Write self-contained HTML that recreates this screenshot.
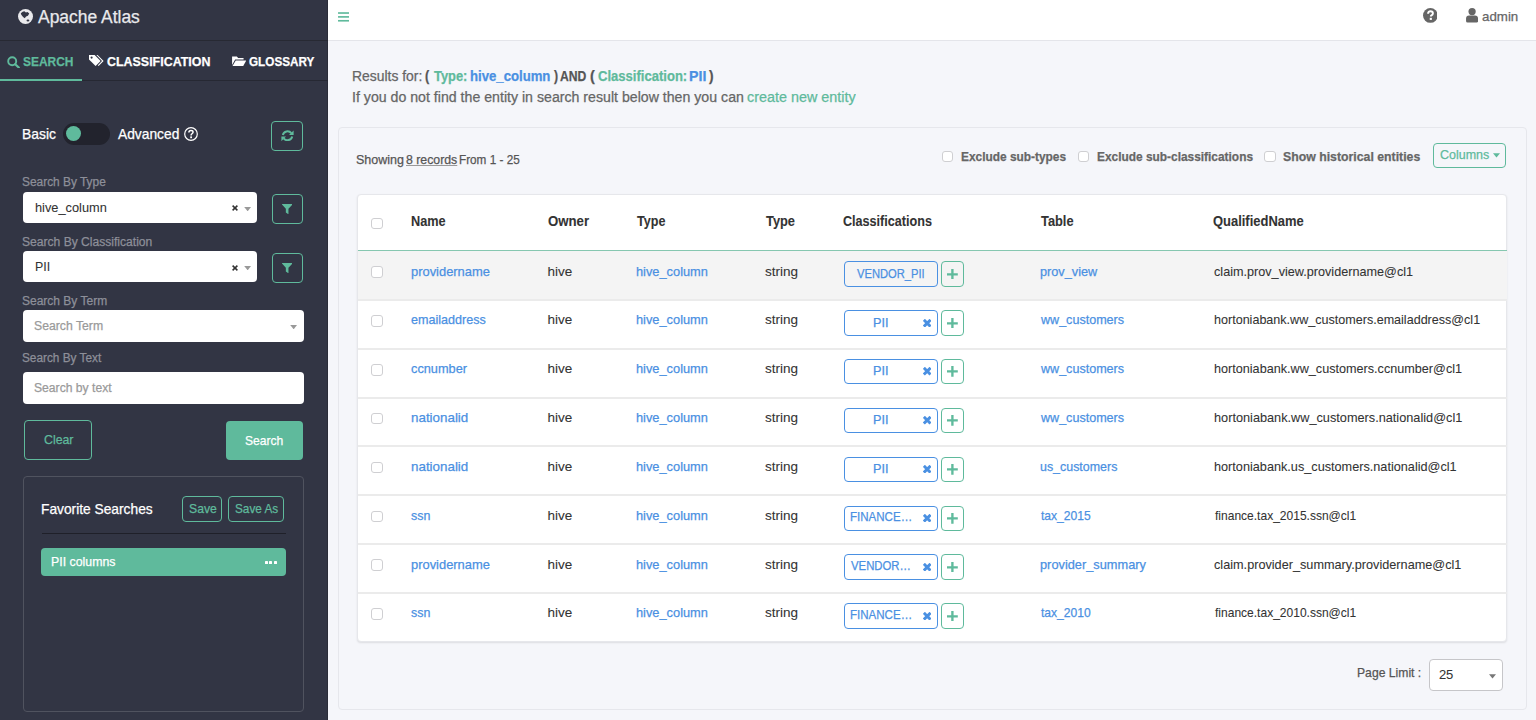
<!DOCTYPE html>
<html><head><meta charset="utf-8">
<style>
*{box-sizing:border-box;margin:0;padding:0}
html,body{width:1536px;height:720px;overflow:hidden;background:#f5f6fa;font-family:"Liberation Sans",sans-serif}
.a{position:absolute}
.t{position:absolute;white-space:nowrap;line-height:1;transform-origin:0 0;-webkit-text-stroke:0.25px currentColor}
</style></head><body>
<div class="a" style="left:0;top:0;width:328px;height:720px;background:#323544"></div>
<div class="a" style="left:327px;top:0;width:1px;height:720px;background:#2a2c38"></div>
<svg class="a" style="left:17.8px;top:8.9px" width="15" height="15" viewBox="0 0 16 16"><circle cx="8" cy="8" r="8" fill="#e9e9ec"/><path d="M3 4.4 L5 3 L6.8 2.4 L8.4 3.7 L10.1 3.2 L12 4.7 L10.6 7.2 L8.6 7.9 L7.2 9.9 L5.4 8.4 L3.5 6.2 Z" fill="#323544"/><ellipse cx="10.6" cy="12.3" rx="1.5" ry="1.1" fill="#323544"/></svg>
<div class="a" style="left:0;top:40.2px;width:328px;height:1.3px;background:#272933"></div>
<svg class="a" style="left:7px;top:55.5px" width="13" height="12" viewBox="0 0 13 12"><circle cx="5.2" cy="5.2" r="4" fill="none" stroke="#5fba9c" stroke-width="1.9"/><path d="M8.2 8.2 L11.8 11.6" stroke="#5fba9c" stroke-width="2.2" stroke-linecap="round"/></svg>
<svg class="a" style="left:89px;top:55px" width="15" height="12" viewBox="0 0 15 12"><path d="M0 0 H5.6 L11.6 6 L6.6 11 L0 4.6 Z" fill="#fff"/><circle cx="2.6" cy="2.6" r="1.1" fill="#323544"/><path d="M7.4 0 H8.6 L14.6 6 L9.6 11 L8.8 10.2 L13 6 Z" fill="#fff"/></svg>
<svg class="a" style="left:231.5px;top:55.5px" width="14.5" height="10.5" viewBox="0 0 15 11"><path d="M0 0.5 H5 L6.3 2 H12 V3.6 H3.2 L0 9.5 Z" fill="#fff"/><path d="M3.8 4.6 H15 L11.6 10.6 H0.4 Z" fill="#fff"/></svg>
<div class="a" style="left:0;top:80px;width:328px;height:1px;background:#262833"></div>
<div class="a" style="left:0;top:79px;width:82px;height:2px;background:#5fba9c"></div>
<div class="a" style="left:63px;top:123px;width:47px;height:21.5px;border-radius:11px;background:#22232d"></div>
<div class="a" style="left:66px;top:125.8px;width:15.2px;height:15.2px;border-radius:50%;background:#5fba9c"></div>
<svg class="a" style="left:183.5px;top:127px" width="14" height="14" viewBox="0 0 14 14"><circle cx="7" cy="7" r="6.3" fill="none" stroke="#fff" stroke-width="1.2"/><path d="M4.9 5.4 Q4.9 3.4 7 3.4 Q9.1 3.4 9.1 5.1 Q9.1 6.2 7.9 6.8 Q7.1 7.2 7.1 8.4" fill="none" stroke="#fff" stroke-width="1.5"/><rect x="6.2" y="9.4" width="1.8" height="1.8" fill="#fff"/></svg>
<div class="a" style="left:271px;top:120.5px;width:32px;height:30px;border:1px solid #5fba9c;border-radius:4px"></div>
<svg class="a" style="left:280.5px;top:129.5px" width="13" height="11.5" viewBox="0 0 13 11.5"><path d="M1.8 5 A4.8 4.8 0 0 1 10.3 3.2" fill="none" stroke="#5fba9c" stroke-width="2"/><path d="M12.6 0.4 V5 H8 Z" fill="#5fba9c"/><path d="M11.2 6.5 A4.8 4.8 0 0 1 2.7 8.3" fill="none" stroke="#5fba9c" stroke-width="2"/><path d="M0.4 11.1 V6.5 H5 Z" fill="#5fba9c"/></svg>
<div class="a" style="left:22.8px;top:192.3px;width:234.4px;height:30.9px;background:#fff;border-radius:4px"></div>
<svg class="a" style="left:231.8px;top:205.4px" width="6" height="6" viewBox="0 0 6 6"><path d="M0.6 0.6 L5.4 5.4 M5.4 0.6 L0.6 5.4" stroke="#333" stroke-width="1.5"/></svg>
<svg class="a" style="left:243.7px;top:206.9px" width="7.3" height="4.3" viewBox="0 0 8 5"><path d="M0 0 H8 L4 5 Z" fill="#999"/></svg>
<div class="a" style="left:271.7px;top:193.5px;width:31.4px;height:30.1px;border:1px solid #5fba9c;border-radius:4px"></div>
<svg class="a" style="left:281.9px;top:203.8px" width="10.3" height="10.3" viewBox="0 0 11 11"><path d="M0 0 H11 V0.6 L6.9 5 V11 L4.1 9.2 V5 L0 0.6 Z" fill="#5fba9c"/></svg>
<div class="a" style="left:22.8px;top:251.4px;width:234.4px;height:30.9px;background:#fff;border-radius:4px"></div>
<svg class="a" style="left:231.8px;top:264.5px" width="6" height="6" viewBox="0 0 6 6"><path d="M0.6 0.6 L5.4 5.4 M5.4 0.6 L0.6 5.4" stroke="#333" stroke-width="1.5"/></svg>
<svg class="a" style="left:243.7px;top:265.9px" width="7.3" height="4.3" viewBox="0 0 8 5"><path d="M0 0 H8 L4 5 Z" fill="#999"/></svg>
<div class="a" style="left:271.7px;top:252.8px;width:31.4px;height:29.9px;border:1px solid #5fba9c;border-radius:4px"></div>
<svg class="a" style="left:281.9px;top:263.1px" width="10.3" height="10.3" viewBox="0 0 11 11"><path d="M0 0 H11 V0.6 L6.9 5 V11 L4.1 9.2 V5 L0 0.6 Z" fill="#5fba9c"/></svg>
<div class="a" style="left:22.8px;top:310.3px;width:281.5px;height:31.4px;background:#fff;border-radius:4px"></div>
<svg class="a" style="left:289.5px;top:324.5px" width="7.3" height="4.3" viewBox="0 0 8 5"><path d="M0 0 H8 L4 5 Z" fill="#999"/></svg>
<div class="a" style="left:22.8px;top:372px;width:281.5px;height:32.2px;background:#fff;border-radius:4px"></div>
<div class="a" style="left:24.2px;top:420px;width:67.9px;height:40px;border:1px solid #5fba9c;border-radius:4px"></div>
<div class="a" style="left:226px;top:420.5px;width:77px;height:39.5px;background:#5fba9c;border-radius:4px"></div>
<div class="a" style="left:22.7px;top:475.5px;width:281.7px;height:236px;border:1px solid #50535f;border-radius:4px"></div>
<div class="a" style="left:182.2px;top:496.1px;width:39.9px;height:25.7px;border:1px solid #5fba9c;border-radius:4px"></div>
<div class="a" style="left:228.3px;top:496.1px;width:55.9px;height:25.7px;border:1px solid #5fba9c;border-radius:4px"></div>
<div class="a" style="left:41.5px;top:533px;width:244.5px;height:1px;background:#1f2029"></div>
<div class="a" style="left:41.2px;top:547.9px;width:244.8px;height:27.9px;background:#5fba9c;border-radius:4px"></div>
<div class="a" style="left:264.5px;top:560.8px;width:3.2px;height:3.6px;background:#fff;border-radius:0.6px"></div><div class="a" style="left:269.2px;top:560.8px;width:3.2px;height:3.6px;background:#fff;border-radius:0.6px"></div><div class="a" style="left:273.9px;top:560.8px;width:3.2px;height:3.6px;background:#fff;border-radius:0.6px"></div>
<div class="a" style="left:328px;top:0;width:1208px;height:40px;background:#fff"></div>
<div class="a" style="left:328px;top:40px;width:1208px;height:1px;background:#e4e5ea"></div>
<svg class="a" style="left:337.5px;top:12px" width="11.7" height="9.7" viewBox="0 0 12 10"><rect x="0" y="0.2" width="12" height="1.7" fill="#5fba9c"/><rect x="0" y="4.2" width="12" height="1.7" fill="#5fba9c"/><rect x="0" y="8.2" width="12" height="1.7" fill="#5fba9c"/></svg>
<svg class="a" style="left:1422.6px;top:8.1px" width="14.8" height="14.8" viewBox="0 0 16 16"><circle cx="8" cy="8" r="8" fill="#666"/><path d="M5.5 6.1 Q5.5 3.5 8.1 3.5 Q10.7 3.5 10.7 5.7 Q10.7 7.1 9.2 7.9 Q8.5 8.3 8.5 9.3" fill="none" stroke="#fff" stroke-width="2.1"/><rect x="7.3" y="10.6" width="2.3" height="2.3" fill="#fff"/></svg>
<svg class="a" style="left:1466px;top:8.4px" width="12.2" height="14.6" viewBox="0 0 12 14.5"><circle cx="6" cy="3.6" r="3.6" fill="#666"/><path d="M0 13 V10.6 Q0 7.4 3 7.4 H9 Q12 7.4 12 10.6 V13 Q12 14.5 10.5 14.5 H1.5 Q0 14.5 0 13 Z" fill="#666"/></svg>
<div class="a" style="left:338.3px;top:127px;width:1188.3px;height:583.2px;border:1px solid #e6e7ec;border-radius:4px;background:#f5f6fa"></div>
<div class="a" style="left:942.1px;top:151.3px;width:11.4px;height:11.2px;border:1px solid #cfcfd2;border-radius:3px;background:#fff"></div>
<div class="a" style="left:1077.9px;top:151.3px;width:11.4px;height:11.2px;border:1px solid #cfcfd2;border-radius:3px;background:#fff"></div>
<div class="a" style="left:1264.3px;top:151.3px;width:11.4px;height:11.2px;border:1px solid #cfcfd2;border-radius:3px;background:#fff"></div>
<div class="a" style="left:1433.2px;top:143.3px;width:72.7px;height:24.5px;border:1px solid #5fba9c;border-radius:4px"></div>
<svg class="a" style="left:1492.5px;top:153px" width="7" height="4.8" viewBox="0 0 8 5"><path d="M0 0 H8 L4 5 Z" fill="#5fba9c"/></svg>
<div class="a" style="left:357px;top:193.5px;width:1150.3px;height:448.8px;background:#fff;border:1px solid #e6e7eb;border-radius:4px;box-shadow:0 1px 2px rgba(0,0,0,0.10)"></div>
<div class="a" style="left:357.5px;top:249.5px;width:1149.5px;height:1.6px;background:#86c7b0"></div>
<div class="a" style="left:357.5px;top:250.9px;width:1149.3px;height:49.1px;background:#f4f4f4"></div>
<div class="a" style="left:357.5px;top:299.00px;width:1149.3px;height:2px;background:#ebebeb"></div>
<div class="a" style="left:357.5px;top:347.83px;width:1149.3px;height:2px;background:#ebebeb"></div>
<div class="a" style="left:357.5px;top:396.66px;width:1149.3px;height:2px;background:#ebebeb"></div>
<div class="a" style="left:357.5px;top:445.49px;width:1149.3px;height:2px;background:#ebebeb"></div>
<div class="a" style="left:357.5px;top:494.32px;width:1149.3px;height:2px;background:#ebebeb"></div>
<div class="a" style="left:357.5px;top:543.15px;width:1149.3px;height:2px;background:#ebebeb"></div>
<div class="a" style="left:357.5px;top:591.98px;width:1149.3px;height:2px;background:#ebebeb"></div>
<div class="a" style="left:371.3px;top:217.50px;width:11.8px;height:11.5px;border:1px solid #cfcfd2;border-radius:3px;background:#fff"></div>
<div class="a" style="left:371.3px;top:266.40px;width:11.8px;height:11.5px;border:1px solid #cfcfd2;border-radius:3px;background:#fff"></div>
<div class="a" style="left:371.3px;top:315.23px;width:11.8px;height:11.5px;border:1px solid #cfcfd2;border-radius:3px;background:#fff"></div>
<div class="a" style="left:371.3px;top:364.06px;width:11.8px;height:11.5px;border:1px solid #cfcfd2;border-radius:3px;background:#fff"></div>
<div class="a" style="left:371.3px;top:412.89px;width:11.8px;height:11.5px;border:1px solid #cfcfd2;border-radius:3px;background:#fff"></div>
<div class="a" style="left:371.3px;top:461.72px;width:11.8px;height:11.5px;border:1px solid #cfcfd2;border-radius:3px;background:#fff"></div>
<div class="a" style="left:371.3px;top:510.55px;width:11.8px;height:11.5px;border:1px solid #cfcfd2;border-radius:3px;background:#fff"></div>
<div class="a" style="left:371.3px;top:559.38px;width:11.8px;height:11.5px;border:1px solid #cfcfd2;border-radius:3px;background:#fff"></div>
<div class="a" style="left:371.3px;top:608.21px;width:11.8px;height:11.5px;border:1px solid #cfcfd2;border-radius:3px;background:#fff"></div>
<div class="a" style="left:844px;top:261.40px;width:93.6px;height:25.4px;border:1.2px solid #4a90e2;border-radius:4px"></div>
<div class="a" style="left:940.7px;top:261.40px;width:23.1px;height:25.4px;border:1.2px solid #5fba9c;border-radius:4px"></div>
<svg class="a" style="left:947px;top:268.70px" width="10.8" height="10.8" viewBox="0 0 11 11"><path d="M5.5 0 V11 M0 5.5 H11" stroke="#5fba9c" stroke-width="2.4"/></svg>
<div class="a" style="left:844px;top:310.23px;width:93.6px;height:25.4px;border:1.2px solid #4a90e2;border-radius:4px"></div>
<svg class="a" style="left:923px;top:318.53px" width="8.4" height="8.4" viewBox="0 0 6 6"><path d="M0.6 0.6 L5.4 5.4 M5.4 0.6 L0.6 5.4" stroke="#4a90e2" stroke-width="2.1"/></svg>
<div class="a" style="left:940.7px;top:310.23px;width:23.1px;height:25.4px;border:1.2px solid #5fba9c;border-radius:4px"></div>
<svg class="a" style="left:947px;top:317.53px" width="10.8" height="10.8" viewBox="0 0 11 11"><path d="M5.5 0 V11 M0 5.5 H11" stroke="#5fba9c" stroke-width="2.4"/></svg>
<div class="a" style="left:844px;top:359.06px;width:93.6px;height:25.4px;border:1.2px solid #4a90e2;border-radius:4px"></div>
<svg class="a" style="left:923px;top:367.35999999999996px" width="8.4" height="8.4" viewBox="0 0 6 6"><path d="M0.6 0.6 L5.4 5.4 M5.4 0.6 L0.6 5.4" stroke="#4a90e2" stroke-width="2.1"/></svg>
<div class="a" style="left:940.7px;top:359.06px;width:23.1px;height:25.4px;border:1.2px solid #5fba9c;border-radius:4px"></div>
<svg class="a" style="left:947px;top:366.36px" width="10.8" height="10.8" viewBox="0 0 11 11"><path d="M5.5 0 V11 M0 5.5 H11" stroke="#5fba9c" stroke-width="2.4"/></svg>
<div class="a" style="left:844px;top:407.89px;width:93.6px;height:25.4px;border:1.2px solid #4a90e2;border-radius:4px"></div>
<svg class="a" style="left:923px;top:416.19px" width="8.4" height="8.4" viewBox="0 0 6 6"><path d="M0.6 0.6 L5.4 5.4 M5.4 0.6 L0.6 5.4" stroke="#4a90e2" stroke-width="2.1"/></svg>
<div class="a" style="left:940.7px;top:407.89px;width:23.1px;height:25.4px;border:1.2px solid #5fba9c;border-radius:4px"></div>
<svg class="a" style="left:947px;top:415.19px" width="10.8" height="10.8" viewBox="0 0 11 11"><path d="M5.5 0 V11 M0 5.5 H11" stroke="#5fba9c" stroke-width="2.4"/></svg>
<div class="a" style="left:844px;top:456.72px;width:93.6px;height:25.4px;border:1.2px solid #4a90e2;border-radius:4px"></div>
<svg class="a" style="left:923px;top:465.02px" width="8.4" height="8.4" viewBox="0 0 6 6"><path d="M0.6 0.6 L5.4 5.4 M5.4 0.6 L0.6 5.4" stroke="#4a90e2" stroke-width="2.1"/></svg>
<div class="a" style="left:940.7px;top:456.72px;width:23.1px;height:25.4px;border:1.2px solid #5fba9c;border-radius:4px"></div>
<svg class="a" style="left:947px;top:464.02px" width="10.8" height="10.8" viewBox="0 0 11 11"><path d="M5.5 0 V11 M0 5.5 H11" stroke="#5fba9c" stroke-width="2.4"/></svg>
<div class="a" style="left:844px;top:505.55px;width:93.6px;height:25.4px;border:1.2px solid #4a90e2;border-radius:4px"></div>
<svg class="a" style="left:923px;top:513.8499999999999px" width="8.4" height="8.4" viewBox="0 0 6 6"><path d="M0.6 0.6 L5.4 5.4 M5.4 0.6 L0.6 5.4" stroke="#4a90e2" stroke-width="2.1"/></svg>
<div class="a" style="left:940.7px;top:505.55px;width:23.1px;height:25.4px;border:1.2px solid #5fba9c;border-radius:4px"></div>
<svg class="a" style="left:947px;top:512.85px" width="10.8" height="10.8" viewBox="0 0 11 11"><path d="M5.5 0 V11 M0 5.5 H11" stroke="#5fba9c" stroke-width="2.4"/></svg>
<div class="a" style="left:844px;top:554.38px;width:93.6px;height:25.4px;border:1.2px solid #4a90e2;border-radius:4px"></div>
<svg class="a" style="left:923px;top:562.68px" width="8.4" height="8.4" viewBox="0 0 6 6"><path d="M0.6 0.6 L5.4 5.4 M5.4 0.6 L0.6 5.4" stroke="#4a90e2" stroke-width="2.1"/></svg>
<div class="a" style="left:940.7px;top:554.38px;width:23.1px;height:25.4px;border:1.2px solid #5fba9c;border-radius:4px"></div>
<svg class="a" style="left:947px;top:561.68px" width="10.8" height="10.8" viewBox="0 0 11 11"><path d="M5.5 0 V11 M0 5.5 H11" stroke="#5fba9c" stroke-width="2.4"/></svg>
<div class="a" style="left:844px;top:603.21px;width:93.6px;height:25.4px;border:1.2px solid #4a90e2;border-radius:4px"></div>
<svg class="a" style="left:923px;top:611.51px" width="8.4" height="8.4" viewBox="0 0 6 6"><path d="M0.6 0.6 L5.4 5.4 M5.4 0.6 L0.6 5.4" stroke="#4a90e2" stroke-width="2.1"/></svg>
<div class="a" style="left:940.7px;top:603.21px;width:23.1px;height:25.4px;border:1.2px solid #5fba9c;border-radius:4px"></div>
<svg class="a" style="left:947px;top:610.51px" width="10.8" height="10.8" viewBox="0 0 11 11"><path d="M5.5 0 V11 M0 5.5 H11" stroke="#5fba9c" stroke-width="2.4"/></svg>
<div class="a" style="left:1428.5px;top:659.1px;width:74.1px;height:31.5px;border:1px solid #c6c6c9;border-radius:4px;background:#fff"></div>
<svg class="a" style="left:1489.3px;top:673.9px" width="7" height="4.8" viewBox="0 0 8 5"><path d="M0 0 H8 L4 5 Z" fill="#777"/></svg>
<div class="t" style="left:37.50px;top:7.60px;font-size:18px;font-weight:400;color:#e9e9ec;transform:scaleX(0.9692);">Apache Atlas</div>
<div class="t" style="left:22.58px;top:54.50px;font-size:13px;font-weight:700;color:#5fba9c;transform:scaleX(0.9189);">SEARCH</div>
<div class="t" style="left:106.84px;top:54.50px;font-size:13px;font-weight:700;color:#fff;transform:scaleX(0.9566);">CLASSIFICATION</div>
<div class="t" style="left:249.40px;top:54.50px;font-size:13px;font-weight:700;color:#fff;transform:scaleX(0.9014);">GLOSSARY</div>
<div class="t" style="left:22.37px;top:125.60px;font-size:15px;font-weight:400;color:#fff;transform:scaleX(0.9257);">Basic</div>
<div class="t" style="left:118.10px;top:125.60px;font-size:15px;font-weight:400;color:#fff;transform:scaleX(0.9197);">Advanced</div>
<div class="t" style="left:22.31px;top:176.30px;font-size:12px;font-weight:400;color:#8d8f99;transform:scaleX(0.9916);">Search By Type</div>
<div class="t" style="left:34.52px;top:200.70px;font-size:13px;font-weight:400;color:#333;transform:scaleX(0.9831);-webkit-text-stroke:0.08px currentColor;">hive_column</div>
<div class="t" style="left:22.29px;top:235.60px;font-size:12px;font-weight:400;color:#8d8f99;transform:scaleX(1.0070);">Search By Classification</div>
<div class="t" style="left:34.51px;top:261.00px;font-size:12.5px;font-weight:400;color:#333;transform:scaleX(0.9923);-webkit-text-stroke:0.08px currentColor;">PII</div>
<div class="t" style="left:22.00px;top:295.00px;font-size:12px;font-weight:400;color:#8d8f99;transform:scaleX(1.0000);">Search By Term</div>
<div class="t" style="left:34.02px;top:320.00px;font-size:12.5px;font-weight:400;color:#9a9a9a;transform:scaleX(0.9783);">Search Term</div>
<div class="t" style="left:22.02px;top:352.30px;font-size:12px;font-weight:400;color:#8d8f99;transform:scaleX(0.9838);">Search By Text</div>
<div class="t" style="left:34.03px;top:382.00px;font-size:12.5px;font-weight:400;color:#9a9a9a;transform:scaleX(0.9709);">Search by text</div>
<div class="t" style="left:43.69px;top:433.30px;font-size:13.5px;font-weight:400;color:#5fba9c;transform:scaleX(0.9129);">Clear</div>
<div class="t" style="left:245.10px;top:433.50px;font-size:13.5px;font-weight:400;color:#fff;transform:scaleX(0.8951);">Search</div>
<div class="t" style="left:40.95px;top:501.70px;font-size:14.5px;font-weight:400;color:#fff;transform:scaleX(0.9491);">Favorite Searches</div>
<div class="t" style="left:188.50px;top:502.00px;font-size:13.5px;font-weight:400;color:#5fba9c;transform:scaleX(0.9034);">Save</div>
<div class="t" style="left:234.73px;top:502.00px;font-size:13.5px;font-weight:400;color:#5fba9c;transform:scaleX(0.8708);">Save As</div>
<div class="t" style="left:50.61px;top:556.20px;font-size:12.5px;font-weight:400;color:#fff;transform:scaleX(0.9875);">PII columns</div>
<div class="t" style="left:1482.11px;top:10.20px;font-size:13.5px;font-weight:400;color:#666;transform:scaleX(0.9857);">admin</div>
<div class="t" style="left:351.71px;top:69.40px;font-size:14px;font-weight:400;color:#666;transform:scaleX(0.9928);">Results for:</div>
<div class="t" style="left:425.10px;top:69.40px;font-size:14px;font-weight:700;color:#555;transform:scaleX(0.9000);">(</div>
<div class="t" style="left:434.30px;top:69.40px;font-size:14px;font-weight:700;color:#5fba9c;transform:scaleX(0.9200);">Type:</div>
<div class="t" style="left:469.76px;top:69.40px;font-size:14px;font-weight:700;color:#4a90e2;transform:scaleX(0.9393);">hive_column</div>
<div class="t" style="left:553.50px;top:69.40px;font-size:14px;font-weight:700;color:#555;transform:scaleX(0.8750);">)</div>
<div class="t" style="left:560.23px;top:69.40px;font-size:14px;font-weight:700;color:#555;transform:scaleX(0.8690);">AND</div>
<div class="t" style="left:589.68px;top:69.40px;font-size:14px;font-weight:700;color:#555;transform:scaleX(1.0250);">(</div>
<div class="t" style="left:598.27px;top:69.40px;font-size:14px;font-weight:700;color:#5fba9c;transform:scaleX(0.9323);">Classification:</div>
<div class="t" style="left:688.99px;top:69.40px;font-size:14px;font-weight:700;color:#4a90e2;transform:scaleX(1.0133);">PII</div>
<div class="t" style="left:709.30px;top:69.40px;font-size:14px;font-weight:700;color:#555;transform:scaleX(0.9750);">)</div>
<div class="t" style="left:351.69px;top:90.00px;font-size:14px;font-weight:400;color:#666;transform:scaleX(1.0111);">If you do not find the entity in search result below then you can</div>
<div class="t" style="left:746.97px;top:90.00px;font-size:14px;font-weight:400;color:#5fba9c;transform:scaleX(1.0267);">create new entity</div>
<div class="t" style="left:355.81px;top:153.50px;font-size:12.6px;font-weight:400;color:#555;transform:scaleX(0.9936);">Showing</div>
<div class="t" style="left:406.12px;top:153.50px;font-size:12.6px;font-weight:400;color:#555;transform:scaleX(0.9765);text-decoration:underline;text-decoration-color:#999">8 records</div>
<div class="t" style="left:459.27px;top:153.50px;font-size:12.6px;font-weight:400;color:#555;transform:scaleX(0.9328);">From 1 - 25</div>
<div class="t" style="left:960.67px;top:150.90px;font-size:12.8px;font-weight:700;color:#666;transform:scaleX(0.9295);">Exclude sub-types</div>
<div class="t" style="left:1096.67px;top:150.90px;font-size:12.8px;font-weight:700;color:#666;transform:scaleX(0.9295);">Exclude sub-classifications</div>
<div class="t" style="left:1282.84px;top:150.90px;font-size:12.8px;font-weight:700;color:#666;transform:scaleX(0.9603);">Show historical entities</div>
<div class="t" style="left:1439.64px;top:148.30px;font-size:13px;font-weight:400;color:#5fba9c;transform:scaleX(0.9600);">Columns</div>
<div class="t" style="left:410.59px;top:214.40px;font-size:14px;font-weight:700;color:#333;transform:scaleX(0.9081);-webkit-text-stroke:0.08px currentColor;">Name</div>
<div class="t" style="left:547.56px;top:214.40px;font-size:14px;font-weight:700;color:#333;transform:scaleX(0.9429);-webkit-text-stroke:0.08px currentColor;">Owner</div>
<div class="t" style="left:637.40px;top:214.40px;font-size:14px;font-weight:700;color:#333;transform:scaleX(0.8968);-webkit-text-stroke:0.08px currentColor;">Type</div>
<div class="t" style="left:765.90px;top:214.40px;font-size:14px;font-weight:700;color:#333;transform:scaleX(0.9161);-webkit-text-stroke:0.08px currentColor;">Type</div>
<div class="t" style="left:842.70px;top:214.40px;font-size:14px;font-weight:700;color:#333;transform:scaleX(0.9000);-webkit-text-stroke:0.08px currentColor;">Classifications</div>
<div class="t" style="left:1040.50px;top:214.40px;font-size:14px;font-weight:700;color:#333;transform:scaleX(0.9171);-webkit-text-stroke:0.08px currentColor;">Table</div>
<div class="t" style="left:1213.28px;top:214.40px;font-size:14px;font-weight:700;color:#333;transform:scaleX(0.9247);-webkit-text-stroke:0.08px currentColor;">QualifiedName</div>
<div class="t" style="left:410.54px;top:264.60px;font-size:13.5px;font-weight:400;color:#4a90e2;transform:scaleX(0.9556);">providername</div>
<div class="t" style="left:547.50px;top:264.60px;font-size:13.5px;font-weight:400;color:#333;transform:scaleX(1.0000);-webkit-text-stroke:0.08px currentColor;">hive</div>
<div class="t" style="left:636.45px;top:264.60px;font-size:13.5px;font-weight:400;color:#4a90e2;transform:scaleX(0.9486);">hive_column</div>
<div class="t" style="left:764.90px;top:264.60px;font-size:13.5px;font-weight:400;color:#333;transform:scaleX(1.0032);-webkit-text-stroke:0.08px currentColor;">string</div>
<div class="t" style="left:1039.56px;top:264.60px;font-size:13.5px;font-weight:400;color:#4a90e2;transform:scaleX(0.9417);">prov_view</div>
<div class="t" style="left:1213.56px;top:264.60px;font-size:13.5px;font-weight:400;color:#333;transform:scaleX(0.9365);-webkit-text-stroke:0.08px currentColor;">claim.prov_view.providername@cl1</div>
<div class="t" style="left:857.00px;top:267.70px;font-size:12.5px;font-weight:400;color:#4a90e2;transform:scaleX(0.8933);">VENDOR_PII</div>
<div class="t" style="left:410.57px;top:313.43px;font-size:13.5px;font-weight:400;color:#4a90e2;transform:scaleX(0.9304);">emailaddress</div>
<div class="t" style="left:547.50px;top:313.43px;font-size:13.5px;font-weight:400;color:#333;transform:scaleX(1.0000);-webkit-text-stroke:0.08px currentColor;">hive</div>
<div class="t" style="left:636.45px;top:313.43px;font-size:13.5px;font-weight:400;color:#4a90e2;transform:scaleX(0.9486);">hive_column</div>
<div class="t" style="left:764.90px;top:313.43px;font-size:13.5px;font-weight:400;color:#333;transform:scaleX(1.0032);-webkit-text-stroke:0.08px currentColor;">string</div>
<div class="t" style="left:1040.50px;top:313.43px;font-size:13.5px;font-weight:400;color:#4a90e2;transform:scaleX(0.9303);">ww_customers</div>
<div class="t" style="left:1213.57px;top:313.43px;font-size:13.5px;font-weight:400;color:#333;transform:scaleX(0.9303);-webkit-text-stroke:0.08px currentColor;">hortoniabank.ww_customers.emailaddress@cl1</div>
<div class="t" style="left:872.78px;top:316.53px;font-size:12.5px;font-weight:400;color:#4a90e2;transform:scaleX(1.0154);">PII</div>
<div class="t" style="left:410.56px;top:362.26px;font-size:13.5px;font-weight:400;color:#4a90e2;transform:scaleX(0.9448);">ccnumber</div>
<div class="t" style="left:547.50px;top:362.26px;font-size:13.5px;font-weight:400;color:#333;transform:scaleX(1.0000);-webkit-text-stroke:0.08px currentColor;">hive</div>
<div class="t" style="left:636.45px;top:362.26px;font-size:13.5px;font-weight:400;color:#4a90e2;transform:scaleX(0.9486);">hive_column</div>
<div class="t" style="left:764.90px;top:362.26px;font-size:13.5px;font-weight:400;color:#333;transform:scaleX(1.0032);-webkit-text-stroke:0.08px currentColor;">string</div>
<div class="t" style="left:1040.50px;top:362.26px;font-size:13.5px;font-weight:400;color:#4a90e2;transform:scaleX(0.9303);">ww_customers</div>
<div class="t" style="left:1213.56px;top:362.26px;font-size:13.5px;font-weight:400;color:#333;transform:scaleX(0.9357);-webkit-text-stroke:0.08px currentColor;">hortoniabank.ww_customers.ccnumber@cl1</div>
<div class="t" style="left:872.78px;top:365.36px;font-size:12.5px;font-weight:400;color:#4a90e2;transform:scaleX(1.0154);">PII</div>
<div class="t" style="left:410.51px;top:411.09px;font-size:13.5px;font-weight:400;color:#4a90e2;transform:scaleX(0.9911);">nationalid</div>
<div class="t" style="left:547.50px;top:411.09px;font-size:13.5px;font-weight:400;color:#333;transform:scaleX(1.0000);-webkit-text-stroke:0.08px currentColor;">hive</div>
<div class="t" style="left:636.45px;top:411.09px;font-size:13.5px;font-weight:400;color:#4a90e2;transform:scaleX(0.9486);">hive_column</div>
<div class="t" style="left:764.90px;top:411.09px;font-size:13.5px;font-weight:400;color:#333;transform:scaleX(1.0032);-webkit-text-stroke:0.08px currentColor;">string</div>
<div class="t" style="left:1040.50px;top:411.09px;font-size:13.5px;font-weight:400;color:#4a90e2;transform:scaleX(0.9303);">ww_customers</div>
<div class="t" style="left:1213.56px;top:411.09px;font-size:13.5px;font-weight:400;color:#333;transform:scaleX(0.9420);-webkit-text-stroke:0.08px currentColor;">hortoniabank.ww_customers.nationalid@cl1</div>
<div class="t" style="left:872.78px;top:414.19px;font-size:12.5px;font-weight:400;color:#4a90e2;transform:scaleX(1.0154);">PII</div>
<div class="t" style="left:410.51px;top:459.92px;font-size:13.5px;font-weight:400;color:#4a90e2;transform:scaleX(0.9911);">nationalid</div>
<div class="t" style="left:547.50px;top:459.92px;font-size:13.5px;font-weight:400;color:#333;transform:scaleX(1.0000);-webkit-text-stroke:0.08px currentColor;">hive</div>
<div class="t" style="left:636.45px;top:459.92px;font-size:13.5px;font-weight:400;color:#4a90e2;transform:scaleX(0.9486);">hive_column</div>
<div class="t" style="left:764.90px;top:459.92px;font-size:13.5px;font-weight:400;color:#333;transform:scaleX(1.0032);-webkit-text-stroke:0.08px currentColor;">string</div>
<div class="t" style="left:1039.58px;top:459.92px;font-size:13.5px;font-weight:400;color:#4a90e2;transform:scaleX(0.9205);">us_customers</div>
<div class="t" style="left:1213.56px;top:459.92px;font-size:13.5px;font-weight:400;color:#333;transform:scaleX(0.9393);-webkit-text-stroke:0.08px currentColor;">hortoniabank.us_customers.nationalid@cl1</div>
<div class="t" style="left:872.78px;top:463.02px;font-size:12.5px;font-weight:400;color:#4a90e2;transform:scaleX(1.0154);">PII</div>
<div class="t" style="left:410.58px;top:508.75px;font-size:13.5px;font-weight:400;color:#4a90e2;transform:scaleX(0.9211);">ssn</div>
<div class="t" style="left:547.50px;top:508.75px;font-size:13.5px;font-weight:400;color:#333;transform:scaleX(1.0000);-webkit-text-stroke:0.08px currentColor;">hive</div>
<div class="t" style="left:636.45px;top:508.75px;font-size:13.5px;font-weight:400;color:#4a90e2;transform:scaleX(0.9486);">hive_column</div>
<div class="t" style="left:764.90px;top:508.75px;font-size:13.5px;font-weight:400;color:#333;transform:scaleX(1.0032);-webkit-text-stroke:0.08px currentColor;">string</div>
<div class="t" style="left:1040.50px;top:508.75px;font-size:13.5px;font-weight:400;color:#4a90e2;transform:scaleX(0.8945);">tax_2015</div>
<div class="t" style="left:1214.50px;top:508.75px;font-size:13.5px;font-weight:400;color:#333;transform:scaleX(0.8905);-webkit-text-stroke:0.08px currentColor;">finance.tax_2015.ssn@cl1</div>
<div class="t" style="left:849.98px;top:511.35px;font-size:12.5px;font-weight:400;color:#4a90e2;transform:scaleX(0.9231);">FINANCE…</div>
<div class="t" style="left:410.54px;top:557.58px;font-size:13.5px;font-weight:400;color:#4a90e2;transform:scaleX(0.9556);">providername</div>
<div class="t" style="left:547.50px;top:557.58px;font-size:13.5px;font-weight:400;color:#333;transform:scaleX(1.0000);-webkit-text-stroke:0.08px currentColor;">hive</div>
<div class="t" style="left:636.45px;top:557.58px;font-size:13.5px;font-weight:400;color:#4a90e2;transform:scaleX(0.9486);">hive_column</div>
<div class="t" style="left:764.90px;top:557.58px;font-size:13.5px;font-weight:400;color:#333;transform:scaleX(1.0032);-webkit-text-stroke:0.08px currentColor;">string</div>
<div class="t" style="left:1039.55px;top:557.58px;font-size:13.5px;font-weight:400;color:#4a90e2;transform:scaleX(0.9477);">provider_summary</div>
<div class="t" style="left:1213.56px;top:557.58px;font-size:13.5px;font-weight:400;color:#333;transform:scaleX(0.9397);-webkit-text-stroke:0.08px currentColor;">claim.provider_summary.providername@cl1</div>
<div class="t" style="left:851.30px;top:560.18px;font-size:12.5px;font-weight:400;color:#4a90e2;transform:scaleX(0.9078);">VENDOR…</div>
<div class="t" style="left:410.58px;top:606.41px;font-size:13.5px;font-weight:400;color:#4a90e2;transform:scaleX(0.9211);">ssn</div>
<div class="t" style="left:547.50px;top:606.41px;font-size:13.5px;font-weight:400;color:#333;transform:scaleX(1.0000);-webkit-text-stroke:0.08px currentColor;">hive</div>
<div class="t" style="left:636.45px;top:606.41px;font-size:13.5px;font-weight:400;color:#4a90e2;transform:scaleX(0.9486);">hive_column</div>
<div class="t" style="left:764.90px;top:606.41px;font-size:13.5px;font-weight:400;color:#333;transform:scaleX(1.0032);-webkit-text-stroke:0.08px currentColor;">string</div>
<div class="t" style="left:1040.50px;top:606.41px;font-size:13.5px;font-weight:400;color:#4a90e2;transform:scaleX(0.8945);">tax_2010</div>
<div class="t" style="left:1214.50px;top:606.41px;font-size:13.5px;font-weight:400;color:#333;transform:scaleX(0.8905);-webkit-text-stroke:0.08px currentColor;">finance.tax_2010.ssn@cl1</div>
<div class="t" style="left:849.98px;top:609.01px;font-size:12.5px;font-weight:400;color:#4a90e2;transform:scaleX(0.9231);">FINANCE…</div>
<div class="t" style="left:1356.56px;top:666.40px;font-size:13px;font-weight:400;color:#555;transform:scaleX(0.9358);">Page Limit :</div>
<div class="t" style="left:1438.90px;top:668.20px;font-size:13px;font-weight:400;color:#333;transform:scaleX(1.0000);-webkit-text-stroke:0.08px currentColor;">25</div>
</body></html>
